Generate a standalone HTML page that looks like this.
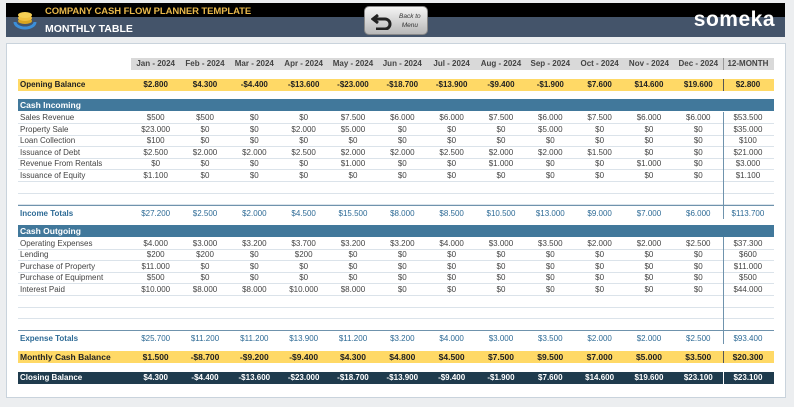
<!DOCTYPE html>
<html><head><meta charset="utf-8"><style>
*{margin:0;padding:0;box-sizing:border-box}
body{width:794px;height:407px;background:#eceef0;font-family:"Liberation Sans",sans-serif;position:relative;overflow:hidden}
.hdr{position:absolute;left:6px;top:3px;width:779px;height:34px;background:#44546a}
.hdr .blk{position:absolute;left:0;top:0;width:100%;height:14px;background:#000}
.t1{position:absolute;left:39px;top:3px;font-size:9.5px;color:#e8b84a;font-weight:bold;letter-spacing:-.1px}
.t2{position:absolute;left:39px;top:20px;font-size:10.5px;color:#fff;font-weight:bold}
.logo{position:absolute;right:10px;top:5px;font-size:21px;color:#fff;font-weight:bold;letter-spacing:.5px}
.btn{position:absolute;left:364px;top:6px;width:64px;height:29px;border-radius:5px;background:linear-gradient(#f4f4f4,#b8b8b8);border:1px solid #888}
.btn span{position:absolute;left:34px;top:5px;font-size:6.5px;font-style:italic;color:#333;text-align:center;line-height:9px}
.panel{position:absolute;left:6px;top:43px;width:780px;height:355px;background:#fff;border:1px solid #c9d3dc}
.row{position:absolute;left:18px;width:756px;height:12px;display:flex;font-size:8px;line-height:12px;color:#444}
.row div{width:49.33px;text-align:center;white-space:nowrap}
.row div:first-child{width:113px;text-align:left;padding-left:2px}
.row div:last-child{width:50px}
.mh{background:#d9d9d9;font-weight:bold;color:#444}
.mh div:first-child{background:#fff}
.yel{background:#ffd966;color:#222;font-weight:bold}
.sec{background:#41789b;color:#fff;font-weight:bold;font-size:8.5px}
.dat{border-bottom:1px solid #dbe3ea}
.tot{color:#2e6b96;font-weight:bold;border-top:1px solid #6f93ad}
.tot div{font-weight:normal}.tot div:first-child{font-weight:bold}
.cls{background:#1f3b4d;color:#fff;font-weight:bold}
.vl{position:absolute;left:723px;width:1px;background:#555}
</style></head><body>
<div class="hdr"><div class="blk"></div>
<svg style="position:absolute;left:6px;top:4px" width="26" height="26" viewBox="0 0 26 26"><path d="M3 15 a10 6 0 0 0 20 0" fill="none" stroke="#3b8fd9" stroke-width="3"/><ellipse cx="13" cy="14" rx="7" ry="3" fill="#d9a520"/><ellipse cx="13" cy="11" rx="7" ry="3" fill="#f0c040"/><ellipse cx="13" cy="8" rx="7" ry="3" fill="#f5cf55"/></svg>
<div class="t1">COMPANY CASH FLOW PLANNER TEMPLATE</div><div class="t2">MONTHLY TABLE</div>
<div class="logo">someka</div></div>
<div class="btn"><svg style="position:absolute;left:6px;top:5px" width="22" height="18" viewBox="0 0 22 18"><path d="M7 3 L2 7 L7 11 M2 7 H14 a5 5 0 0 1 0 10 H5" fill="none" stroke="#222" stroke-width="3"/></svg><span>Back to<br>Menu</span></div>
<div class="panel"></div>
<div class="row mh" style="top:58px"><div></div><div>Jan - 2024</div><div>Feb - 2024</div><div>Mar - 2024</div><div>Apr - 2024</div><div>May - 2024</div><div>Jun - 2024</div><div>Jul - 2024</div><div>Aug - 2024</div><div>Sep - 2024</div><div>Oct - 2024</div><div>Nov - 2024</div><div>Dec - 2024</div><div>12-MONTH</div></div>
<div class="row yel" style="top:79px"><div>Opening Balance</div><div>$2.800</div><div>$4.300</div><div>-$4.400</div><div>-$13.600</div><div>-$23.000</div><div>-$18.700</div><div>-$13.900</div><div>-$9.400</div><div>-$1.900</div><div>$7.600</div><div>$14.600</div><div>$19.600</div><div>$2.800</div></div>
<div class="row sec" style="top:99px"><div>Cash Incoming</div></div>
<div class="row dat" style="top:112px"><div>Sales Revenue</div><div>$500</div><div>$500</div><div>$0</div><div>$0</div><div>$7.500</div><div>$6.000</div><div>$6.000</div><div>$7.500</div><div>$6.000</div><div>$7.500</div><div>$6.000</div><div>$6.000</div><div>$53.500</div></div>
<div class="row dat" style="top:123.6px"><div>Property Sale</div><div>$23.000</div><div>$0</div><div>$0</div><div>$2.000</div><div>$5.000</div><div>$0</div><div>$0</div><div>$0</div><div>$5.000</div><div>$0</div><div>$0</div><div>$0</div><div>$35.000</div></div>
<div class="row dat" style="top:135.2px"><div>Loan Collection</div><div>$100</div><div>$0</div><div>$0</div><div>$0</div><div>$0</div><div>$0</div><div>$0</div><div>$0</div><div>$0</div><div>$0</div><div>$0</div><div>$0</div><div>$100</div></div>
<div class="row dat" style="top:146.8px"><div>Issuance of Debt</div><div>$2.500</div><div>$2.000</div><div>$2.000</div><div>$2.500</div><div>$2.000</div><div>$2.000</div><div>$2.500</div><div>$2.000</div><div>$2.000</div><div>$1.500</div><div>$0</div><div>$0</div><div>$21.000</div></div>
<div class="row dat" style="top:158.4px"><div>Revenue From Rentals</div><div>$0</div><div>$0</div><div>$0</div><div>$0</div><div>$1.000</div><div>$0</div><div>$0</div><div>$1.000</div><div>$0</div><div>$0</div><div>$1.000</div><div>$0</div><div>$3.000</div></div>
<div class="row dat" style="top:170px"><div>Issuance of Equity</div><div>$1.100</div><div>$0</div><div>$0</div><div>$0</div><div>$0</div><div>$0</div><div>$0</div><div>$0</div><div>$0</div><div>$0</div><div>$0</div><div>$0</div><div>$1.100</div></div>
<div class="row dat" style="top:181.6px"></div>
<div class="row dat" style="top:193.2px"></div>
<div class="row tot" style="top:205px;height:15px;line-height:15px"><div>Income Totals</div><div>$27.200</div><div>$2.500</div><div>$2.000</div><div>$4.500</div><div>$15.500</div><div>$8.000</div><div>$8.500</div><div>$10.500</div><div>$13.000</div><div>$9.000</div><div>$7.000</div><div>$6.000</div><div>$113.700</div></div>
<div class="row sec" style="top:225px"><div>Cash Outgoing</div></div>
<div class="row dat" style="top:237.5px"><div>Operating Expenses</div><div>$4.000</div><div>$3.000</div><div>$3.200</div><div>$3.700</div><div>$3.200</div><div>$3.200</div><div>$4.000</div><div>$3.000</div><div>$3.500</div><div>$2.000</div><div>$2.000</div><div>$2.500</div><div>$37.300</div></div>
<div class="row dat" style="top:249.1px"><div>Lending</div><div>$200</div><div>$200</div><div>$0</div><div>$200</div><div>$0</div><div>$0</div><div>$0</div><div>$0</div><div>$0</div><div>$0</div><div>$0</div><div>$0</div><div>$600</div></div>
<div class="row dat" style="top:260.7px"><div>Purchase of Property</div><div>$11.000</div><div>$0</div><div>$0</div><div>$0</div><div>$0</div><div>$0</div><div>$0</div><div>$0</div><div>$0</div><div>$0</div><div>$0</div><div>$0</div><div>$11.000</div></div>
<div class="row dat" style="top:272.3px"><div>Purchase of Equipment</div><div>$500</div><div>$0</div><div>$0</div><div>$0</div><div>$0</div><div>$0</div><div>$0</div><div>$0</div><div>$0</div><div>$0</div><div>$0</div><div>$0</div><div>$500</div></div>
<div class="row dat" style="top:283.9px"><div>Interest Paid</div><div>$10.000</div><div>$8.000</div><div>$8.000</div><div>$10.000</div><div>$8.000</div><div>$0</div><div>$0</div><div>$0</div><div>$0</div><div>$0</div><div>$0</div><div>$0</div><div>$44.000</div></div>
<div class="row dat" style="top:295.5px"></div>
<div class="row dat" style="top:307.1px"></div>
<div class="row tot" style="top:330px;height:15px;line-height:15px"><div>Expense Totals</div><div>$25.700</div><div>$11.200</div><div>$11.200</div><div>$13.900</div><div>$11.200</div><div>$3.200</div><div>$4.000</div><div>$3.000</div><div>$3.500</div><div>$2.000</div><div>$2.000</div><div>$2.500</div><div>$93.400</div></div>
<div class="row yel" style="top:351px;font-size:8.5px"><div>Monthly Cash Balance</div><div>$1.500</div><div>-$8.700</div><div>-$9.200</div><div>-$9.400</div><div>$4.300</div><div>$4.800</div><div>$4.500</div><div>$7.500</div><div>$9.500</div><div>$7.000</div><div>$5.000</div><div>$3.500</div><div>$20.300</div></div>
<div class="row cls" style="top:372px"><div>Closing Balance</div><div>$4.300</div><div>-$4.400</div><div>-$13.600</div><div>-$23.000</div><div>-$18.700</div><div>-$13.900</div><div>-$9.400</div><div>-$1.900</div><div>$7.600</div><div>$14.600</div><div>$19.600</div><div>$23.100</div><div>$23.100</div></div>
<div class="vl" style="top:58px;height:12px;background:#999"></div>
<div class="vl" style="top:79px;height:12px"></div>
<div class="vl" style="top:112px;height:107px;background:#6f93ad"></div>
<div class="vl" style="top:237px;height:107px;background:#6f93ad"></div>
<div class="vl" style="top:351px;height:12px"></div>
<div class="vl" style="top:372px;height:12px;background:#fff"></div>
</body></html>
